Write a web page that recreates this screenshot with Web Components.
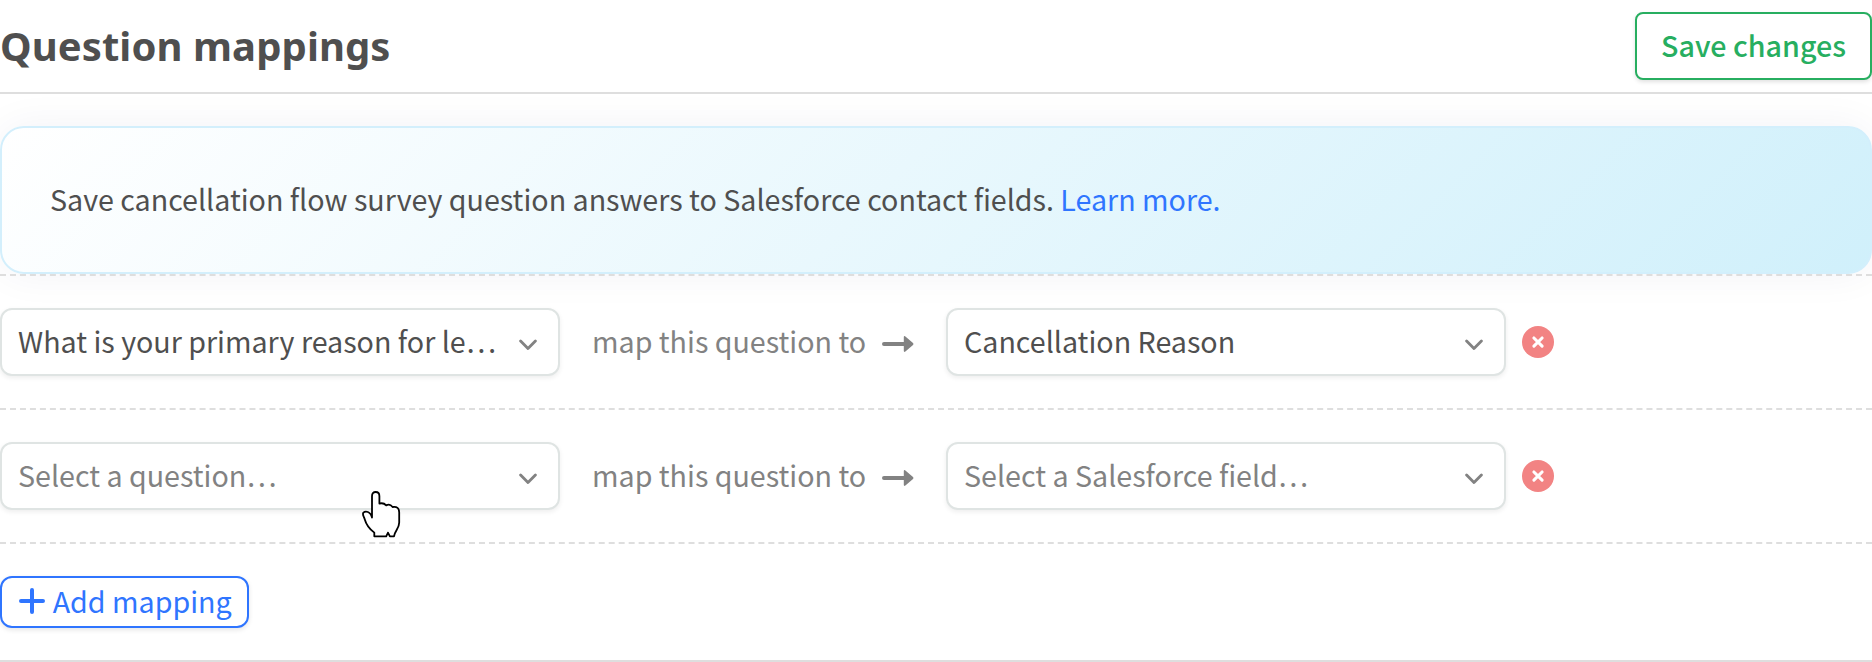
<!DOCTYPE html>
<html lang="en">
<head>
<meta charset="utf-8">
<title>Question mappings</title>
<style>
html,body{margin:0;padding:0;background:#fff;overflow:hidden}
body{font-family:"Noto Sans CJK SC","Noto Sans",sans-serif;font-size:28.65px;line-height:40px;color:#4f4f4f;height:662px}
</style>
</head>
<body>
<mapping-page></mapping-page>
<script>
const define = (name, html) => {
  const template = document.createElement('template');
  template.innerHTML = html;
  customElements.define(name, class extends HTMLElement {
    constructor() {
      super();
      this.attachShadow({ mode: 'open' }).appendChild(template.content.cloneNode(true));
    }
  });
};

define('page-header', `
<style>
:host{display:flex;justify-content:space-between;align-items:center;height:92px;border-bottom:2px solid #dedede}
h1{margin:0;font:700 40px/48px "Noto Sans",sans-serif;letter-spacing:.08px}
</style>
<h1><slot></slot></h1><slot name="action"></slot>`);

define('save-button', `
<style>
:host{display:block}
button{display:flex;align-items:center;justify-content:center;box-sizing:border-box;width:237px;height:68px;margin:0;padding:0 0 2px;border:2px solid #27ae60;border-radius:8px;background:#fff;color:#27ae60;font:inherit;font-weight:500;white-space:nowrap;box-shadow:0 2px 4px rgba(0,0,0,.12)}
</style>
<button><span><slot></slot></span></button>`);

define('info-banner', `
<style>
:host{display:flex;align-items:center;box-sizing:border-box;height:148px;margin-top:32px;padding:0 48px 2px;border:2px solid #d3effc;border-radius:24px;background:linear-gradient(135deg,#fff 0%,#d0f0fb 100%) border-box;box-shadow:0 0 40px rgba(30,30,90,.055)}
p{margin:0;white-space:nowrap}
</style>
<p><slot></slot></p>`);

define('select-box', `
<style>
:host{display:flex;align-items:center;justify-content:space-between;box-sizing:border-box;width:560px;height:68px;padding:0 21px 0 16px;border:2px solid #dfe4e3;border-radius:12px;background:#fff;box-shadow:0 2px 5px rgba(0,0,0,.07)}
:host([empty]){color:#828282}
span{white-space:nowrap;padding-bottom:2px}
svg{display:block;margin-top:6px}
</style>
<span><slot></slot></span>
<svg width="18" height="12" viewBox="0 0 18 12" fill="none" stroke="#828282" stroke-width="2.8" stroke-linecap="round" stroke-linejoin="round"><path d="M1.6 2L9 9.6l7.4-7.6"/></svg>`);

define('map-arrow', `
<style>
:host{display:flex;align-items:center;box-sizing:border-box;width:386px;padding-left:32px;color:#828282;white-space:nowrap}
span{width:290px;padding-bottom:2px}
svg{display:block;margin-top:4px}
</style>
<span><slot></slot></span>
<svg width="32" height="18" viewBox="0 0 32 18" fill="#828282"><path d="M2 7H21.8V2.2Q21.8.3 23.4 1.5L31 8Q32 9 31 10L23.4 16.5Q21.8 17.7 21.8 15.8V11H2A2 2 0 0 1 2 7Z"/></svg>`);

define('remove-button', `
<style>:host{display:block;margin-left:16px}svg{display:block}</style>
<svg width="32" height="32" viewBox="0 0 32 32"><circle cx="16" cy="16" r="16" fill="#f28383"/><path d="M11.9 12l8.2 8.2M20.1 12l-8.2 8.2" stroke="#fff" stroke-width="3.1" stroke-linecap="round"/></svg>`);

define('mapping-row', `
<style>:host{display:flex;align-items:center;height:132px;border-top:2px dashed #dedede}</style>
<slot name="from"></slot><map-arrow>map this question to</map-arrow><slot name="to"></slot><remove-button></remove-button>`);

define('add-mapping', `
<style>
:host{display:block;height:116px;border-top:2px dashed #dedede;border-bottom:2px solid #dedede}
button{display:flex;align-items:center;box-sizing:border-box;width:249px;height:52px;margin:32px 0 0;padding:0 0 2px 17px;gap:7.7px;border:2px solid #2f75ff;border-radius:12px;background:#fff;color:#2f75ff;font:inherit;white-space:nowrap;box-shadow:0 2px 5px rgba(0,0,0,.1)}
svg{display:block}
</style>
<button><svg width="26" height="26" viewBox="0 0 26 26" stroke="currentColor" stroke-width="4" stroke-linecap="round"><path d="M13 2v22M2 13h22"/></svg><span><slot></slot></span></button>`);

define('hand-cursor', `
<style>:host{position:absolute;left:361px;top:490px}svg{display:block}</style>
<svg width="40" height="49" viewBox="0 0 40 49" fill="#fff" stroke="#000" stroke-width="1.8" stroke-linejoin="round"><path d="M11 27.6V6.2Q11 2 14.7 2T18.4 6.2V13.6Q22.5 12.4 25.2 15.4Q28.8 13.4 31.6 17Q38.2 16 38.2 22.6V32.5C38.2 38.5 34 40.5 33 46.3H28.9L27 42.6L25.2 46.3H13.3V42.6C8 38.5 5 33.8 3.8 29.4C2.8 26 1.3 25.4 2.2 22.8C4.4 20.7 9.5 21.2 11 27.6Z"/></svg>`);

define('mapping-page', `
<style>:host{display:block;position:relative;height:662px}a{color:#2f75ff;text-decoration:none}</style>
<page-header>Question mappings<save-button slot="action">Save changes</save-button></page-header>
<info-banner>Save cancellation flow survey question answers to Salesforce contact fields. <a>Learn more.</a></info-banner>
<mapping-row><select-box slot="from">What is your primary reason for le…</select-box><select-box slot="to">Cancellation Reason</select-box></mapping-row>
<mapping-row><select-box slot="from" empty>Select a question…</select-box><select-box slot="to" empty>Select a Salesforce field…</select-box></mapping-row>
<add-mapping>Add mapping</add-mapping>
<hand-cursor></hand-cursor>`);
</script>
</body>
</html>
